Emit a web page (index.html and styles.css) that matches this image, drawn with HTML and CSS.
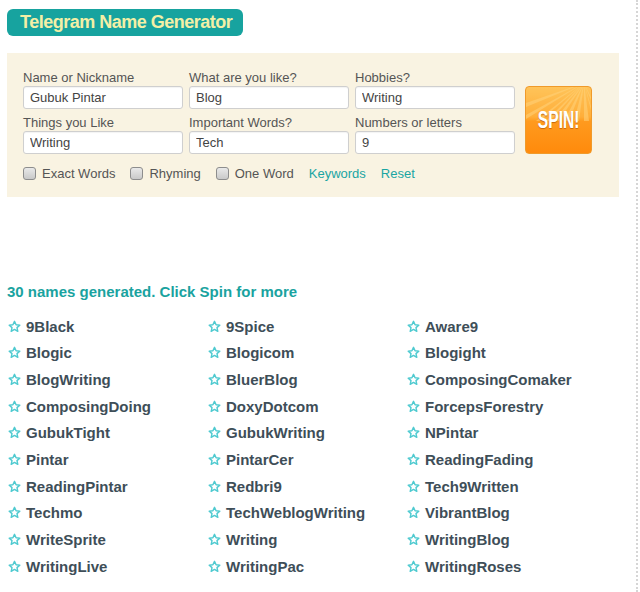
FILE: index.html
```html
<!DOCTYPE html>
<html>
<head>
<meta charset="utf-8">
<link rel="stylesheet" href="styles.css">
</head>
<body>
<div class="page">
  <div class="main">
    <h1 class="title">Telegram Name Generator</h1>
    <form class="panel">
      <div class="fields">
        <label class="field"><span class="lbl">Name or Nickname</span><input class="inp" type="text" value="Gubuk Pintar"></label>
        <label class="field"><span class="lbl">What are you like?</span><input class="inp" type="text" value="Blog"></label>
        <label class="field"><span class="lbl">Hobbies?</span><input class="inp" type="text" value="Writing"></label>
        <label class="field"><span class="lbl">Things you Like</span><input class="inp" type="text" value="Writing"></label>
        <label class="field"><span class="lbl">Important Words?</span><input class="inp" type="text" value="Tech"></label>
        <label class="field"><span class="lbl">Numbers or letters</span><input class="inp" type="text" value="9"></label>
      </div>
      <button type="button" class="spin">
        <svg class="rays" viewBox="0 0 67 68" width="67" height="68" aria-hidden="true">
          <g fill="#ffd27a" opacity="0.55">
            <polygon points="58,-4 20,34 24,34"/>
            <polygon points="58,-4 28,34 33,34"/>
            <polygon points="58,-4 38,34 43,34"/>
            <polygon points="58,-4 48,34 53,34"/>
            <polygon points="58,-4 58,34 63,34"/>
            <polygon points="58,-4 67,26 67,31"/>
            <polygon points="58,-4 67,14 67,18"/>
            <polygon points="58,-4 10,34 14,34"/>
            <polygon points="58,-4 0,28 0,32"/>
            <polygon points="58,-4 0,16 0,20"/>
          </g>
        </svg>
        <span class="spin-txt">SPIN!</span>
      </button>
      <div class="opts">
        <label class="opt"><input type="checkbox" class="cb"><span>Exact Words</span></label>
        <label class="opt"><input type="checkbox" class="cb"><span>Rhyming</span></label>
        <label class="opt"><input type="checkbox" class="cb"><span>One Word</span></label>
        <a class="link" href="#">Keywords</a>
        <a class="link" href="#">Reset</a>
      </div>
    </form>
    <h2 class="count">30 names generated. Click Spin for more</h2>
    <ul class="names">
      <li>9Black</li><li>9Spice</li><li>Aware9</li>
      <li>Blogic</li><li>Blogicom</li><li>Blogight</li>
      <li>BlogWriting</li><li>BluerBlog</li><li>ComposingComaker</li>
      <li>ComposingDoing</li><li>DoxyDotcom</li><li>ForcepsForestry</li>
      <li>GubukTight</li><li>GubukWriting</li><li>NPintar</li>
      <li>Pintar</li><li>PintarCer</li><li>ReadingFading</li>
      <li>ReadingPintar</li><li>Redbri9</li><li>Tech9Written</li>
      <li>Techmo</li><li>TechWeblogWriting</li><li>VibrantBlog</li>
      <li>WriteSprite</li><li>Writing</li><li>WritingBlog</li>
      <li>WritingLive</li><li>WritingPac</li><li>WritingRoses</li>
    </ul>
  </div>
  <div class="divider"></div>
</div>
</body>
</html>
```
FILE: styles.css
```css
html, body {
  margin: 0;
  padding: 0;
  background: #fff;
  font-family: "Liberation Sans", Arial, sans-serif;
}
.page {
  display: flex;
  height: 592px;
  overflow: hidden;
}
.main {
  width: 612px;
  padding-left: 7px;
}
.divider {
  margin-left: 17px;
  width: 0;
  border-left: 2px dotted #d6d6d6;
  height: 592px;
}
.title {
  display: inline-block;
  margin: 9px 0 0 0;
  height: 27px;
  line-height: 27px;
  padding: 0 11px 0 13px;
  background: #17a39f;
  color: #f3efa6;
  font-size: 18px;
  font-weight: bold;
  letter-spacing: -0.5px;
  border-radius: 6px;
}
.panel {
  margin: 17px 0 0 0;
  height: 144px;
  box-sizing: border-box;
  padding: 16px 0 0 16px;
  background: #f9f3e2;
  display: grid;
  grid-template-columns: 492px 67px;
  column-gap: 10px;
  align-content: start;
}
.fields {
  display: grid;
  grid-template-columns: repeat(3, 160px);
  column-gap: 6px;
  row-gap: 5px;
}
.field {
  display: flex;
  flex-direction: column;
}
.lbl {
  font-size: 13px;
  line-height: 17px;
  color: #555;
}
.inp {
  box-sizing: border-box;
  width: 160px;
  height: 23px;
  margin: 0;
  border: 1px solid #cfcfcf;
  border-radius: 3px;
  padding: 0 6px;
  font-family: "Liberation Sans", Arial, sans-serif;
  font-size: 13px;
  color: #444;
  background: #fff;
  box-shadow: inset 0 1px 1px rgba(0,0,0,0.05);
}
.spin {
  position: relative;
  margin-top: 17px;
  width: 67px;
  height: 68px;
  padding: 0;
  border: 1px solid #f09a2a;
  border-radius: 4px;
  overflow: hidden;
  background: linear-gradient(to bottom, #ffc45a 0%, #ffae3a 45%, #ff9a1e 52%, #ff8a0c 100%);
  cursor: pointer;
}
.rays {
  position: absolute;
  left: 0;
  top: 0;
}
.spin-txt {
  position: relative;
  display: inline-block;
  font-family: "Liberation Sans", Arial, sans-serif;
  font-weight: bold;
  font-size: 23px;
  color: #fff;
  transform: scaleX(0.68);
  text-shadow: 0 1px 1px rgba(160,70,0,0.6);
  letter-spacing: 0;
}
.opts {
  grid-column: 1 / -1;
  margin-top: 12px;
  display: flex;
  align-items: center;
  gap: 15px;
  font-size: 13px;
  color: #555;
}
.opt {
  display: flex;
  align-items: center;
  gap: 6px;
}
.cb {
  appearance: none;
  -webkit-appearance: none;
  margin: 0;
  width: 13px;
  height: 13px;
  box-sizing: border-box;
  border: 1px solid #8d8d8d;
  border-radius: 3px;
  background: linear-gradient(to bottom, #e9e9e9, #c9c9c9);
}
.link {
  color: #1aa5a2;
  text-decoration: none;
}
.count {
  margin: 86px 0 0 0;
  font-size: 15px;
  line-height: 18px;
  font-weight: bold;
  color: #1aa39f;
}
.names {
  list-style: none;
  margin: 12px 0 0 0;
  padding: 0;
  display: grid;
  grid-template-columns: 200px 199px 200px;
  grid-auto-rows: 26.67px;
  align-items: center;
}
.names li {
  display: flex;
  align-items: center;
  gap: 5px;
  font-size: 15px;
  font-weight: bold;
  color: #3e4e58;
}
.names li::before {
  content: "";
  width: 13px;
  height: 13px;
  flex: none;
  margin-left: 1px;
  background: url("data:image/svg+xml;utf8,<svg xmlns='http://www.w3.org/2000/svg' viewBox='0 0 24 24'><path d='M12 2.5l2.9 6.3 6.9.7-5.2 4.6 1.5 6.8L12 17.4l-6.1 3.5 1.5-6.8L2.2 9.5l6.9-.7z' fill='none' stroke='%234fcad0' stroke-width='2.6' stroke-linejoin='round'/></svg>") no-repeat center / contain;
}
```
